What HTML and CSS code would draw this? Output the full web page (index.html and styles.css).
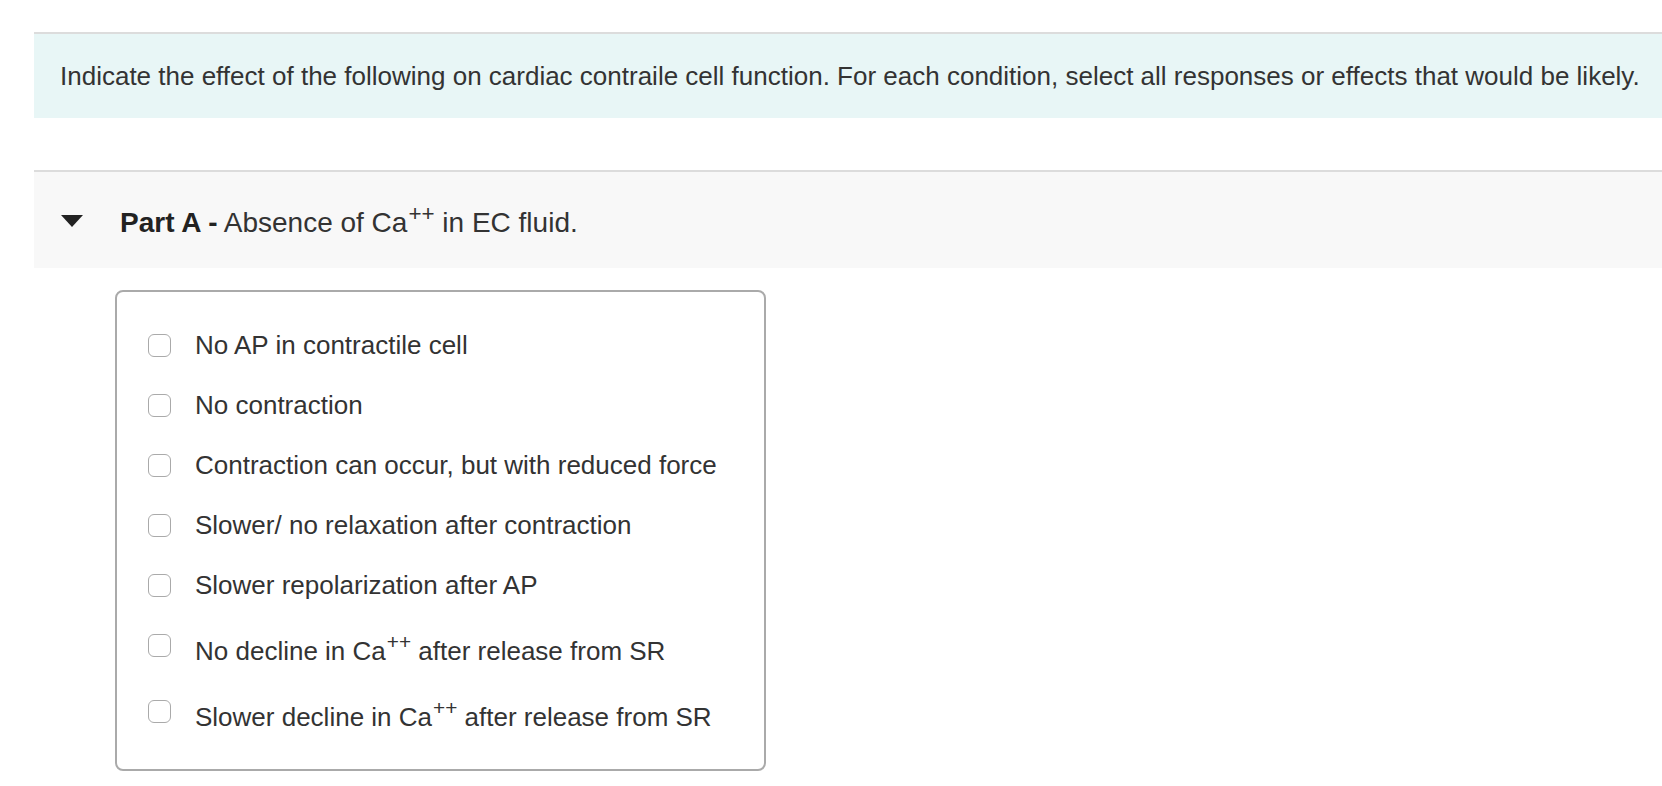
FILE: index.html
```html
<!DOCTYPE html>
<html lang="en">
<head>
<meta charset="utf-8">
<title>Cardiac contractile cell function</title>
<link rel="stylesheet" href="styles.css">
</head>
<body>
<div class="page">
  <div class="instructions">
    <p>Indicate the effect of the following on cardiac contraile cell function. For each condition, select all responses or effects that would be likely.</p>
  </div>

  <section class="part">
    <div class="part-header">
      <svg class="caret" width="22" height="12" viewBox="0 0 22 12" aria-hidden="true"><path d="M0 0 H22 L11 12 Z" fill="#222"/></svg>
      <h2 class="part-title"><strong>Part A -</strong> Absence of Ca<sup>++</sup> in EC fluid.</h2>
    </div>

    <div class="answers">
      <label class="option"><span class="check"></span><span class="text">No AP in contractile cell</span></label>
      <label class="option"><span class="check"></span><span class="text">No contraction</span></label>
      <label class="option"><span class="check"></span><span class="text">Contraction can occur, but with reduced force</span></label>
      <label class="option"><span class="check"></span><span class="text">Slower/ no relaxation after contraction</span></label>
      <label class="option"><span class="check"></span><span class="text">Slower repolarization after AP</span></label>
      <label class="option"><span class="check"></span><span class="text">No decline in Ca<sup>++</sup> after release from SR</span></label>
      <label class="option"><span class="check"></span><span class="text">Slower decline in Ca<sup>++</sup> after release from SR</span></label>
    </div>
  </section>
</div>
</body>
</html>
```
FILE: styles.css
```css
html, body {
  margin: 0;
  padding: 0;
  background: #fff;
}

body {
  font-family: "Liberation Sans", Arial, Helvetica, sans-serif;
  color: #333;
}

.page {
  padding: 32px 0 0 34px;
}

.instructions {
  border-top: 2px solid #dcdcdc;
  background: #e8f6f6;
  height: 84px;
  display: flex;
  align-items: center;
  padding-left: 26px;
}

.instructions p {
  margin: 0;
  font-size: 26px;
  white-space: nowrap;
}

.part {
  margin-top: 52px;
}

.part-header {
  border-top: 2px solid #dcdcdc;
  background: #f8f8f8;
  height: 96px;
  display: flex;
  align-items: center;
  padding-left: 27px;
}

.caret {
  flex: none;
  margin-right: 37px;
  margin-top: 2px;
}

.part-title {
  margin: 0;
  font-size: 28px;
  font-weight: normal;
  color: #333;
}

.part-title strong {
  font-weight: bold;
  color: #222;
}

sup {
  font-size: 0.8em;
  line-height: normal;
  vertical-align: 11px;
  margin-left: 1px;
}

.answers {
  margin: 22px 0 0 81px;
  width: 651px;
  height: 481px;
  box-sizing: border-box;
  border: 2px solid #aaa;
  border-radius: 8px;
  padding: 38px 0 0 31px;
  display: flex;
  flex-direction: column;
  gap: 30px;
}

.option {
  display: flex;
  align-items: flex-start;
  font-size: 26px;
  line-height: 30px;
  color: #333;
}

.check {
  flex: none;
  width: 23px;
  height: 23px;
  box-sizing: border-box;
  border: 1.5px solid #aaa;
  border-radius: 6px;
  background: #fff;
  margin-top: 4px;
  margin-right: 24px;
}
```
